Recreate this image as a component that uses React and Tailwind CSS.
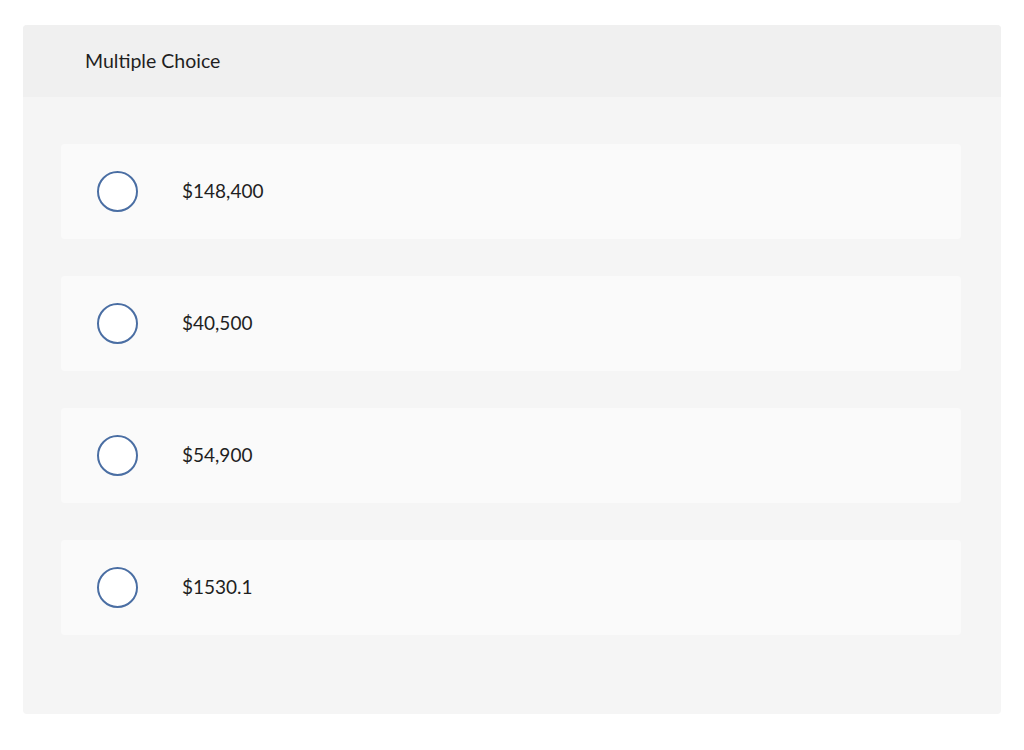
const options = ["$148,400", "$40,500", "$54,900", "$1530.1"];

const App = () => {
  return (
    <div className="w-[1024px] h-[750px] bg-white pt-[25px] pl-[23px]" style={{ fontFamily: "Lato, 'Open Sans', sans-serif" }}>
      <div className="w-[978px] h-[689px] bg-[#f5f5f5] rounded-[4px] overflow-hidden">
        <div className="h-[72px] bg-[#f0f0f0] flex items-center pl-[62px]">
          <span className="text-[19.5px] text-[#1f1f1f]">Multiple Choice</span>
        </div>
        <div className="pt-[47px] pl-[38px] flex flex-col gap-[37px]">
          {options.map((opt) => (
            <div key={opt} className="w-[900px] h-[95px] bg-[#fafafa] rounded-[4px] flex items-center pl-[36px]">
              <div className="w-[41px] h-[41px] rounded-full border-2 border-[#4a6ea3] bg-white shrink-0" />
              <span className="ml-[44px] text-[19px] text-[#1f1f1f]">{opt}</span>
            </div>
          ))}
        </div>
      </div>
    </div>
  );
};

export default App;
